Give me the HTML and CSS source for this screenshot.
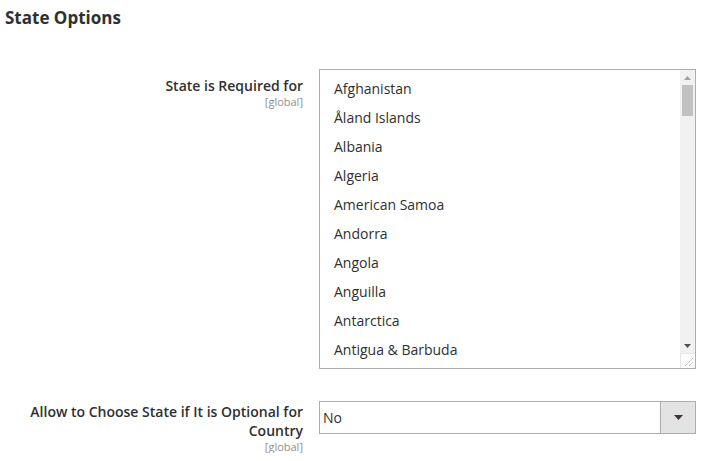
FILE: index.html
```html
<!DOCTYPE html>
<html lang="en">
<head>
    <meta charset="UTF-8">
    <title>State Options</title>
    <link rel="stylesheet" href="styles.css">
</head>
<body>
<div class="section">
    <h2 class="section-title">State Options</h2>

    <div class="field">
        <div class="field-label">
            <span class="label-text">State is Required for</span>
            <span class="scope">[global]</span>
        </div>
        <div class="field-control">
            <div class="multiselect">
                <ul class="option-list">
                    <li>Afghanistan</li>
                    <li>Åland Islands</li>
                    <li>Albania</li>
                    <li>Algeria</li>
                    <li>American Samoa</li>
                    <li>Andorra</li>
                    <li>Angola</li>
                    <li>Anguilla</li>
                    <li>Antarctica</li>
                    <li>Antigua &amp; Barbuda</li>
                </ul>
                <div class="scrollbar">
                    <div class="scroll-btn">
                        <svg width="7" height="4" viewBox="0 0 7 4"><polygon points="0,4 7,4 3.5,0" fill="#a3a3a3"/></svg>
                    </div>
                    <div class="scroll-track">
                        <div class="scroll-thumb"></div>
                    </div>
                    <div class="scroll-btn">
                        <svg width="7" height="4" viewBox="0 0 7 4"><polygon points="0,0 7,0 3.5,4" fill="#505050"/></svg>
                    </div>
                    <div class="resizer">
                        <svg width="15" height="15" viewBox="0 0 15 15">
                            <line x1="5" y1="13" x2="13" y2="5" stroke="#8a8a8a" stroke-width="1" stroke-dasharray="1 1"/>
                            <line x1="9" y1="13" x2="13" y2="9" stroke="#8a8a8a" stroke-width="1" stroke-dasharray="1 1"/>
                        </svg>
                    </div>
                </div>
            </div>
        </div>
    </div>

    <div class="field field-select">
        <div class="field-label">
            <span class="label-text">Allow to Choose State if It is Optional for Country</span>
            <span class="scope">[global]</span>
        </div>
        <div class="field-control">
            <div class="select">
                <span class="select-value">No</span>
                <span class="select-btn">
                    <svg width="9" height="5" viewBox="0 0 9 5"><polygon points="0,0 9,0 4.5,5" fill="#41362f"/></svg>
                </span>
            </div>
        </div>
    </div>
</div>
</body>
</html>
```

FILE: styles.css
```css
body{
    margin: 0;
    background: #fff;
    color: #303030;
    font-family: "Open Sans", "Liberation Sans", sans-serif;
}
.section{
    padding-left: 5px;
}
.section-title{
    margin: 0;
    padding-top: 6px;
    font-size: 17px;
    line-height: 24px;
    font-weight: 700;
    color: #303030;
}
.field{
    display: flex;
    align-items: flex-start;
    margin-top: 39px;
}
.field-select{
    margin-top: 32px;
}
.field-label{
    width: 298px;
    flex-shrink: 0;
    padding-top: 7px;
    text-align: right;
}
.field-select .field-label{
    padding-top: 1px;
}
.label-text{
    display: block;
    font-size: 14px;
    line-height: 19px;
    font-weight: 600;
}
.scope{
    display: block;
    padding-top: 1px;
    font-size: 11px;
    line-height: 12px;
    color: #8f8f8f;
}
.field-control{
    margin-left: 16px;
    width: 377px;
}
.multiselect{
    display: flex;
    height: 300px;
    box-sizing: border-box;
    border: 1px solid #adadad;
    overflow: hidden;
}
.option-list{
    flex: 1;
    margin: 0;
    padding: 4px 0 0 14px;
    list-style: none;
    font-size: 14px;
    line-height: 29px;
}
.scrollbar{
    width: 15px;
    display: flex;
    flex-direction: column;
    background: #f1f1f1;
}
.scroll-btn{
    height: 15px;
    display: flex;
    align-items: center;
    justify-content: center;
}
.scroll-track{
    flex: 1;
    padding: 0 2px;
}
.scroll-thumb{
    height: 31px;
    background: #c1c1c1;
}
.resizer{
    height: 15px;
    background: #fff;
    box-sizing: border-box;
    border-left: 1px solid #e6e6e6;
    border-top: 1px solid #e6e6e6;
}
.resizer svg{
    display: block;
    margin: -1px 0 0 -1px;
}
.select{
    display: flex;
    height: 33px;
    box-sizing: border-box;
    border: 1px solid #adadad;
}
.select-value{
    flex: 1;
    padding-left: 3px;
    font-size: 14px;
    line-height: 31px;
}
.select-btn{
    width: 34px;
    border-left: 1px solid #adadad;
    background: #e3e3e3;
    display: flex;
    align-items: center;
    justify-content: center;
}
```
